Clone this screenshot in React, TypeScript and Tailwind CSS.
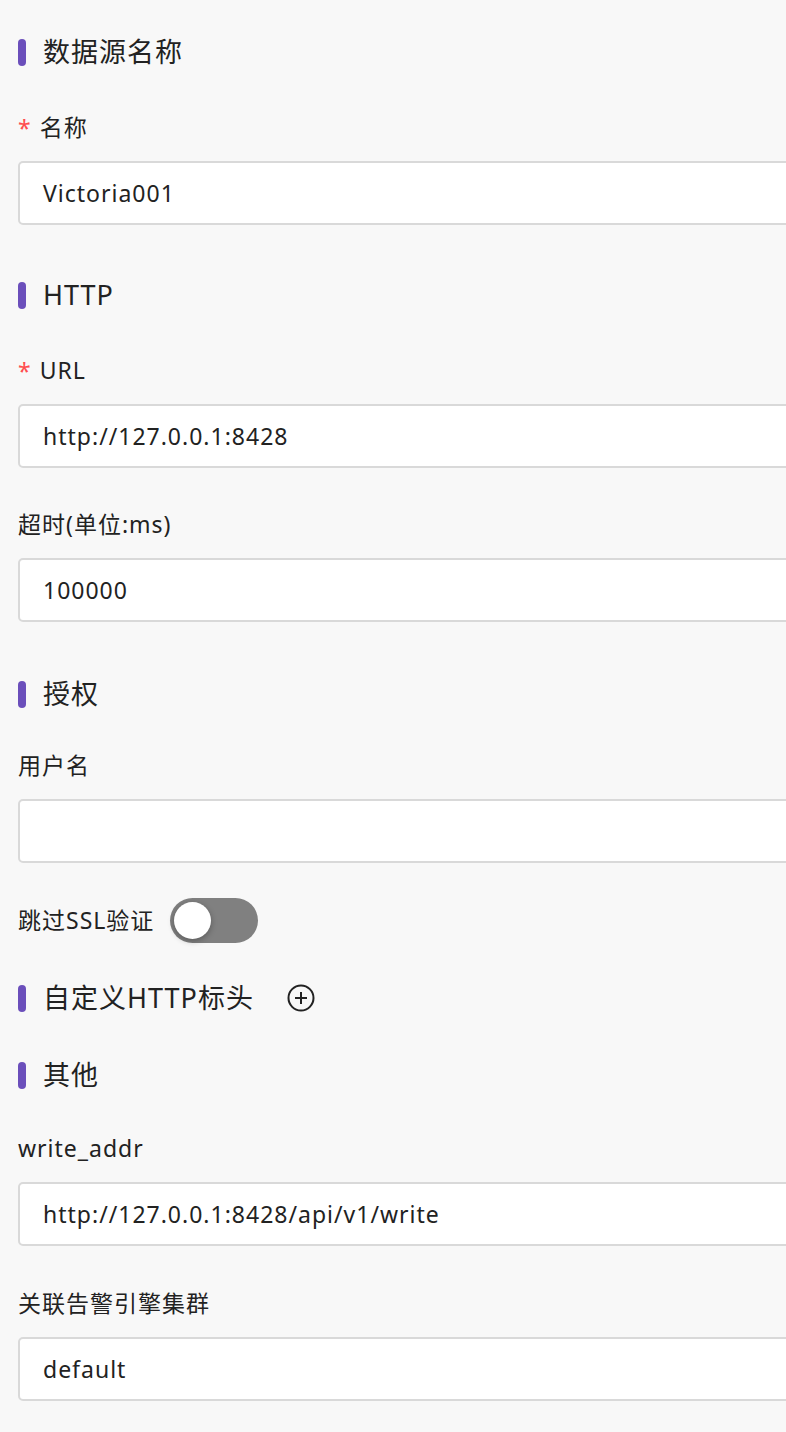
import React from "react";

const font = { fontFamily: '"Noto Sans", "Noto Sans CJK SC", sans-serif' };

function SectionTitle({ children, className = "" }: { children: React.ReactNode; className?: string }) {
  return (
    <div className={`flex h-[28px] items-center ${className}`}>
      <span className="h-[27px] w-[8px] rounded-full bg-[#6b4fbb]" />
      <span className="ml-[17px] text-[27px] leading-[28px] tracking-[1px] text-[#222]">{children}</span>
    </div>
  );
}

function Label({ children, required }: { children: React.ReactNode; required?: boolean }) {
  return (
    <div className="flex h-[30px] items-center text-[23px] leading-[30px] tracking-[1px] text-[#222]">
      {required && <span className="mr-[8px] mt-[2px] text-[#ff4d4f]">*</span>}
      {children}
    </div>
  );
}

function Field({ value }: { value: string }) {
  return (
    <div className="mt-[19px] flex h-[64px] w-[800px] shrink-0 items-center rounded-[5px] border-2 border-[#d9d9d9] bg-white pl-[23px] text-[23px] tracking-[1px] text-[#222]">
      {value}
    </div>
  );
}

export default function App() {
  return (
    <div style={font} className="min-h-[1432px] w-full overflow-hidden bg-[#f8f8f8] pl-[18px] pt-[38px]">
      <div className="flex flex-col">
        <SectionTitle>数据源名称</SectionTitle>

        <div className="mt-[46px]">
          <Label required>名称</Label>
          <Field value="Victoria001" />
        </div>

        <SectionTitle className="mt-[56px]">HTTP</SectionTitle>

        <div className="mt-[46px]">
          <Label required>URL</Label>
          <Field value="http://127.0.0.1:8428" />
        </div>

        <div className="mt-[41px]">
          <Label>超时(单位:ms)</Label>
          <Field value="100000" />
        </div>

        <SectionTitle className="mt-[58px]">授权</SectionTitle>

        <div className="mt-[42px]">
          <Label>用户名</Label>
          <Field value="" />
        </div>

        <div className="mt-[35px] flex h-[45px] items-center">
          <span className="text-[23px] tracking-[1px] text-[#222]">跳过SSL验证</span>
          <button className="relative ml-[16px] h-[45px] w-[88px] rounded-full bg-[#808080]">
            <span className="absolute left-[4px] top-[4px] h-[37px] w-[37px] rounded-full bg-white shadow-[0_2px_6px_rgba(0,0,0,0.3)]" />
          </button>
        </div>

        <div className="mt-[41px] flex items-center">
          <SectionTitle>自定义HTTP标头</SectionTitle>
          <svg className="ml-[33px]" width="28" height="28" viewBox="0 0 28 28" fill="none" stroke="#222" strokeWidth="2">
            <circle cx="14" cy="14" r="12.5" />
            <path d="M14 8v12M8 14h12" />
          </svg>
        </div>

        <SectionTitle className="mt-[49px]">其他</SectionTitle>

        <div className="mt-[44px]">
          <Label>write_addr</Label>
          <Field value="http://127.0.0.1:8428/api/v1/write" />
        </div>

        <div className="mt-[42px]">
          <Label>关联告警引擎集群</Label>
          <Field value="default" />
        </div>
      </div>
    </div>
  );
}
